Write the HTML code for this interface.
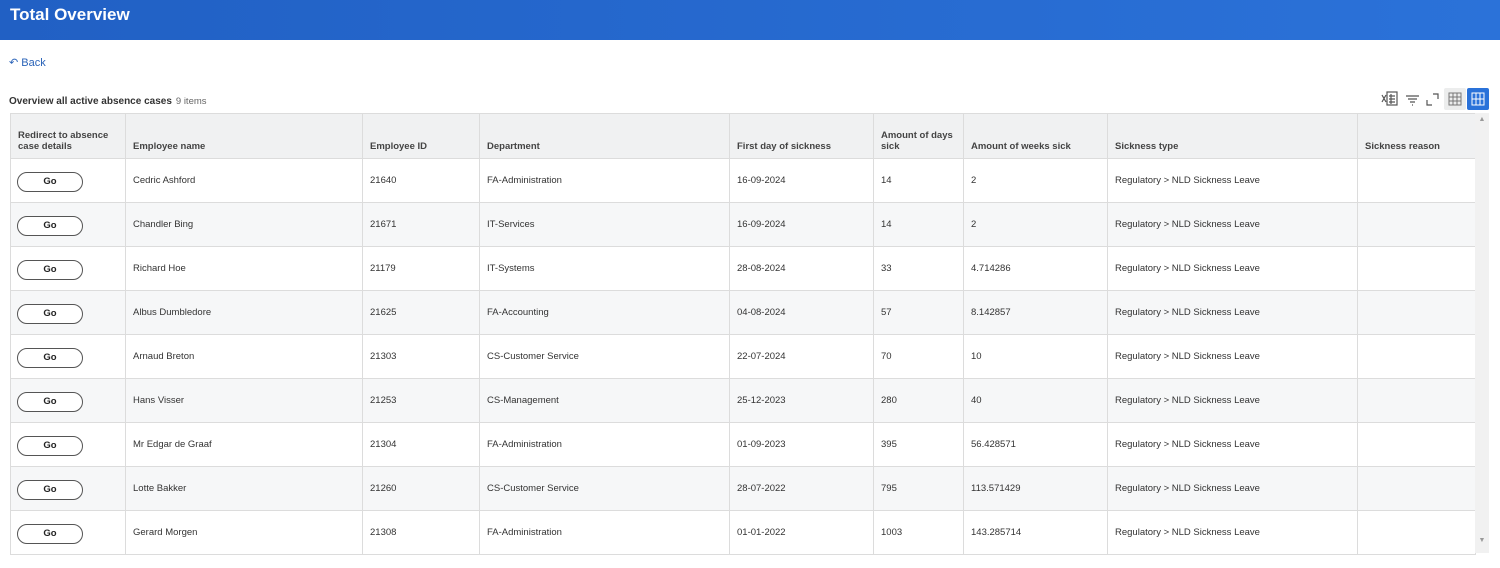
<!DOCTYPE html>
<html><head><style>
body{margin:0;width:1500px;height:568px;background:#fff;font-family:"Liberation Sans",sans-serif;overflow:hidden;position:relative}
.hdr{position:absolute;left:0;top:0;width:1500px;height:40px;background:linear-gradient(90deg,#2160c4,#2b72d9)}
.hdr span{position:absolute;left:10px;top:5px;color:#fff;font-weight:bold;font-size:17px}
.back{position:absolute;left:9px;top:56px;font-size:11px;color:#2a63b8}
.ttl{position:absolute;left:9px;top:96px;font-size:10px;color:#333;font-weight:bold}
.ttl i{font-style:normal;font-weight:normal;color:#666;margin-left:4px;font-size:9.5px}
table{position:absolute;left:10px;top:113px;border-collapse:collapse;font-size:9.5px;color:#333;table-layout:fixed;width:1465px}
td,th{border:1px solid #dcdcdc;padding:0 7px;vertical-align:middle;text-align:left}
th{background:#f0f1f2;height:33px;font-weight:bold;vertical-align:bottom;padding-top:5px;padding-bottom:6px;color:#444}
td{height:43px;padding-top:0;padding-bottom:0}
tr:nth-child(odd) td{background:#f6f7f8}
.go{display:inline-block;width:64px;height:18px;border:1px solid #555;border-radius:10px;text-align:center;line-height:18px;font-weight:bold;color:#222;background:#fff;margin-left:-1px;margin-top:2px}
.sb{position:absolute;left:1475px;top:113px;width:14px;height:440px;background:#f1f1f1}
.icons{position:absolute;top:88px;left:1380px}
</style></head><body>
<div class="hdr"><span>Total Overview</span></div>
<div class="back">↶ Back</div>
<div class="ttl">Overview all active absence cases<i>9 items</i></div>
<svg class="icons" width="110" height="24">
<g fill="none" stroke="#555" stroke-width="1.2">
<rect x="7" y="4" width="10" height="13"/><path d="M9 8h6M9 11h6M9 14h6M11 6v10"/><path d="M2 7l4 7M6 7l-4 7"/>
<path d="M26 8h13M28 11h9M30 14h5M32 17h1"/>
<path d="M47 12v5h5M53 6h5v5"/>
</g>
<rect x="64" y="0" width="22" height="22" rx="2" fill="#eceded"/>
<g stroke="#777" fill="none"><rect x="69" y="5" width="12" height="12"/><path d="M69 9h12M69 13h12M73 5v12M77 5v12"/></g>
<rect x="87" y="0" width="22" height="22" rx="2" fill="#2a72d9"/>
<g stroke="#fff" fill="none"><rect x="92" y="5" width="12" height="12"/><path d="M92 11h12M96 5v12M100 5v12"/></g>
</svg>
<table>
<colgroup><col style="width:115px"><col style="width:237px"><col style="width:117px"><col style="width:250px"><col style="width:144px"><col style="width:90px"><col style="width:144px"><col style="width:250px"><col style="width:118px"></colgroup>
<tr><th>Redirect to absence case details</th><th>Employee name</th><th>Employee ID</th><th>Department</th><th>First day of sickness</th><th>Amount of days sick</th><th>Amount of weeks sick</th><th>Sickness type</th><th>Sickness reason</th></tr>
<tr><td><span class="go">Go</span></td><td>Cedric Ashford</td><td>21640</td><td>FA-Administration</td><td>16-09-2024</td><td>14</td><td>2</td><td>Regulatory &gt; NLD Sickness Leave</td><td></td></tr>
<tr><td><span class="go">Go</span></td><td>Chandler Bing</td><td>21671</td><td>IT-Services</td><td>16-09-2024</td><td>14</td><td>2</td><td>Regulatory &gt; NLD Sickness Leave</td><td></td></tr>
<tr><td><span class="go">Go</span></td><td>Richard Hoe</td><td>21179</td><td>IT-Systems</td><td>28-08-2024</td><td>33</td><td>4.714286</td><td>Regulatory &gt; NLD Sickness Leave</td><td></td></tr>
<tr><td><span class="go">Go</span></td><td>Albus Dumbledore</td><td>21625</td><td>FA-Accounting</td><td>04-08-2024</td><td>57</td><td>8.142857</td><td>Regulatory &gt; NLD Sickness Leave</td><td></td></tr>
<tr><td><span class="go">Go</span></td><td>Arnaud Breton</td><td>21303</td><td>CS-Customer Service</td><td>22-07-2024</td><td>70</td><td>10</td><td>Regulatory &gt; NLD Sickness Leave</td><td></td></tr>
<tr><td><span class="go">Go</span></td><td>Hans Visser</td><td>21253</td><td>CS-Management</td><td>25-12-2023</td><td>280</td><td>40</td><td>Regulatory &gt; NLD Sickness Leave</td><td></td></tr>
<tr><td><span class="go">Go</span></td><td>Mr Edgar de Graaf</td><td>21304</td><td>FA-Administration</td><td>01-09-2023</td><td>395</td><td>56.428571</td><td>Regulatory &gt; NLD Sickness Leave</td><td></td></tr>
<tr><td><span class="go">Go</span></td><td>Lotte Bakker</td><td>21260</td><td>CS-Customer Service</td><td>28-07-2022</td><td>795</td><td>113.571429</td><td>Regulatory &gt; NLD Sickness Leave</td><td></td></tr>
<tr><td><span class="go">Go</span></td><td>Gerard Morgen</td><td>21308</td><td>FA-Administration</td><td>01-01-2022</td><td>1003</td><td>143.285714</td><td>Regulatory &gt; NLD Sickness Leave</td><td></td></tr>
</table>
<div class="sb"><div style="color:#999;font-size:7px;text-align:center;margin-top:3px">▲</div><div style="color:#999;font-size:7px;text-align:center;margin-top:414px">▼</div></div>
</body></html>
